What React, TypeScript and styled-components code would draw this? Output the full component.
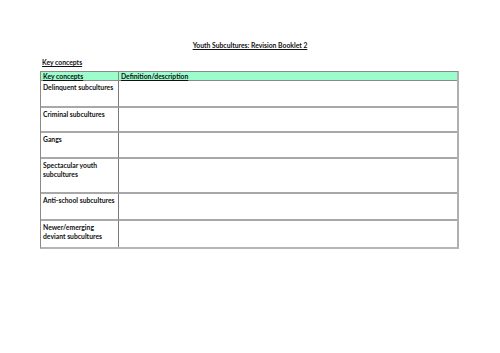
import React from 'react';
import styled, { createGlobalStyle } from 'styled-components';

const GlobalStyle = createGlobalStyle`
  html, body {
    margin: 0;
    padding: 0;
    background: #ffffff;
  }
  body {
    font-family: Lato, "Open Sans", sans-serif;
    color: #111111;
  }
`;

const Page = styled.div`
  width: 500px;
  height: 353px;
  box-sizing: border-box;
  padding: 41px 41px 0 40px;
  background: #ffffff;
`;

const Title = styled.div`
  text-align: center;
  font-size: 6.8px;
  font-weight: 700;
  text-decoration: underline;
  line-height: 9px;
  padding-left: 1px;
`;

const SubHeading = styled.div`
  margin-top: 8px;
  margin-left: 2px;
  font-size: 6.8px;
  font-weight: 700;
  text-decoration: underline;
  line-height: 9px;
`;

const Table = styled.div`
  margin-top: 4px;
  display: grid;
  grid-template-columns: 78px 1fr;
  border: 1px solid #8a8a8a;
  border-bottom-width: 2px;
  border-bottom-color: #b5b5b5;
  border-right-color: #b0b0b0;
  border-right-width: 2px;
`;

const HeaderCell = styled.div<{ $last?: boolean }>`
  height: 8px;
  background: #9cfccc;
  border-right: ${(p) => (p.$last ? 'none' : '1px solid #8a8a8a')};
  border-bottom: 1px solid #8a8a8a;
  padding-left: 2px;
  font-size: 6.8px;
  font-weight: 700;
  text-decoration: underline;
  line-height: 8px;
`;

const Cell = styled.div<{ $h: number; $label?: boolean; $lastRow?: boolean }>`
  box-sizing: border-box;
  height: ${(p) => p.$h}px;
  border-right: ${(p) => (p.$label ? '1px solid #7a7a7a' : 'none')};
  border-bottom: ${(p) => (p.$lastRow ? 'none' : '2px solid #a8a8a8')};
  padding: 2px 2px 0 2px;
  font-size: 6.8px;
  font-weight: 700;
  line-height: 9px;
  white-space: pre-line;
`;

const rows = [
  { label: 'Delinquent subcultures', h: 27 },
  { label: 'Criminal subcultures', h: 25 },
  { label: 'Gangs', h: 26 },
  { label: 'Spectacular youth\nsubcultures', h: 35 },
  { label: 'Anti-school subcultures', h: 27 },
  { label: 'Newer/emerging\ndeviant subcultures', h: 26 },
];

export default function App() {
  return (
    <>
      <GlobalStyle />
      <Page>
        <Title>Youth Subcultures: Revision Booklet 2</Title>
        <SubHeading>Key concepts</SubHeading>
        <Table>
          <HeaderCell>Key concepts</HeaderCell>
          <HeaderCell $last>Definition/description</HeaderCell>
          {rows.map((r, i) => (
            <React.Fragment key={r.label}>
              <Cell $h={r.h} $label $lastRow={i === rows.length - 1}>
                {r.label}
              </Cell>
              <Cell $h={r.h} $lastRow={i === rows.length - 1} />
            </React.Fragment>
          ))}
        </Table>
      </Page>
    </>
  );
}
